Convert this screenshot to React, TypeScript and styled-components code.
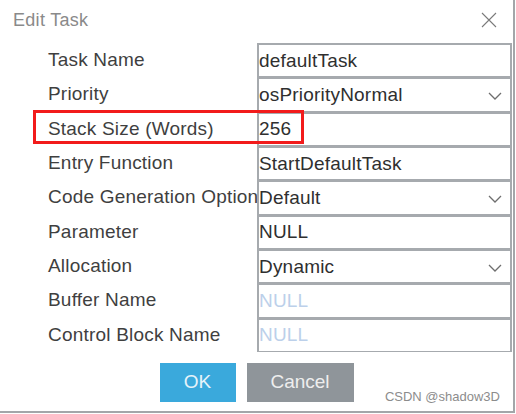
import styled, { createGlobalStyle } from 'styled-components'

const GlobalStyle = createGlobalStyle`
  html, body {
    margin: 0;
    padding: 0;
    background: #ffffff;
  }
  body {
    font-family: 'Liberation Sans', Arial, sans-serif;
  }
`

type Field = {
  label: string
  value: string
  select?: boolean
  placeholder?: boolean
  highlight?: boolean
}

const fields: Field[] = [
  { label: 'Task Name', value: 'defaultTask' },
  { label: 'Priority', value: 'osPriorityNormal', select: true },
  { label: 'Stack Size (Words)', value: '256', highlight: true },
  { label: 'Entry Function', value: 'StartDefaultTask' },
  { label: 'Code Generation Option', value: 'Default', select: true },
  { label: 'Parameter', value: 'NULL' },
  { label: 'Allocation', value: 'Dynamic', select: true },
  { label: 'Buffer Name', value: 'NULL', placeholder: true },
  { label: 'Control Block Name', value: 'NULL', placeholder: true },
]

export default function App() {
  return (
    <>
      <GlobalStyle />
      <Dialog>
        <TitleBar>
          <Title>Edit Task</Title>
          <CloseButton aria-label="close">
            <svg width="16" height="16" viewBox="0 0 16 16">
              <path d="M1 1 L15 15 M15 1 L1 15" stroke="#7a7a7a" strokeWidth="1.1" fill="none" />
            </svg>
          </CloseButton>
        </TitleBar>
        <Form>
          {fields.map((f) => (
            <Row key={f.label} $highlight={f.highlight}>
              <Label>{f.label}</Label>
              <FieldBox>
                <Value $placeholder={f.placeholder}>{f.value}</Value>
                {f.select && (
                  <Chevron width="14" height="8" viewBox="0 0 14 8">
                    <polyline points="1,1 7,7 13,1" stroke="#6e6e6e" strokeWidth="1.3" fill="none" />
                  </Chevron>
                )}
              </FieldBox>
            </Row>
          ))}
        </Form>
        <ButtonBar>
          <Button $variant="primary">OK</Button>
          <Button $variant="secondary">Cancel</Button>
        </ButtonBar>
        <Watermark>CSDN @shadow3D</Watermark>
      </Dialog>
    </>
  )
}

const Dialog = styled.div`
  position: relative;
  width: 513px;
  height: 411px;
  background: #ffffff;
  border-right: 2px solid #a3a6a9;
  border-bottom: 2px solid #a3a6a9;
  display: flex;
  flex-direction: column;
`

const TitleBar = styled.div`
  height: 43px;
  display: flex;
  align-items: center;
  justify-content: space-between;
  padding: 0 16px 0 13px;
  box-sizing: border-box;
`

const Title = styled.span`
  font-size: 18px;
  letter-spacing: 0.3px;
  color: #8a8a8a;
  margin-top: -2px;
`

const CloseButton = styled.div`
  width: 16px;
  height: 16px;
  display: flex;
  margin-top: -3px;
`

const Form = styled.div`
  display: flex;
  flex-direction: column;
`

const Row = styled.div<{ $highlight?: boolean }>`
  position: relative;
  display: flex;
  height: 34.33px;

  &::after {
    content: '';
    display: ${({ $highlight }) => ($highlight ? 'block' : 'none')};
    position: absolute;
    left: 33px;
    top: -2px;
    width: 271px;
    height: 34px;
    border: 3px solid #f21b1b;
    box-sizing: border-box;
    pointer-events: none;
  }
`

const Label = styled.div`
  width: 257px;
  padding-left: 48px;
  box-sizing: border-box;
  display: flex;
  align-items: center;
  font-size: 19px;
  letter-spacing: 0.2px;
  color: #3f3f3f;
  white-space: nowrap;
  overflow: hidden;
`

const FieldBox = styled.div`
  position: relative;
  width: 255px;
  box-sizing: border-box;
  border: 2px solid #a6aaae;
  border-bottom-width: 1px;
  display: flex;
  align-items: center;
  padding-left: 0;
`

const Value = styled.span<{ $placeholder?: boolean }>`
  font-size: 19px;
  letter-spacing: 0.2px;
  color: ${({ $placeholder }) => ($placeholder ? '#bcd0ea' : '#2f2f2f')};
  white-space: nowrap;
`

const Chevron = styled.svg`
  position: absolute;
  right: 8px;
  top: 50%;
  margin-top: -3px;
`

const ButtonBar = styled.div`
  display: flex;
  justify-content: center;
  gap: 11px;
  margin-top: 11px;
`

const Button = styled.div<{ $variant: 'primary' | 'secondary' }>`
  height: 39px;
  width: ${({ $variant }) => ($variant === 'primary' ? '76px' : '107px')};
  display: flex;
  align-items: center;
  justify-content: center;
  font-size: 19px;
  background: ${({ $variant }) => ($variant === 'primary' ? '#3aa9dc' : '#8f959a')};
  color: ${({ $variant }) => ($variant === 'primary' ? '#e6f3fa' : '#eeeeee')};
`

const Watermark = styled.span`
  position: absolute;
  right: 13px;
  bottom: 7px;
  font-size: 13px;
  color: #8c8c8c;
`
